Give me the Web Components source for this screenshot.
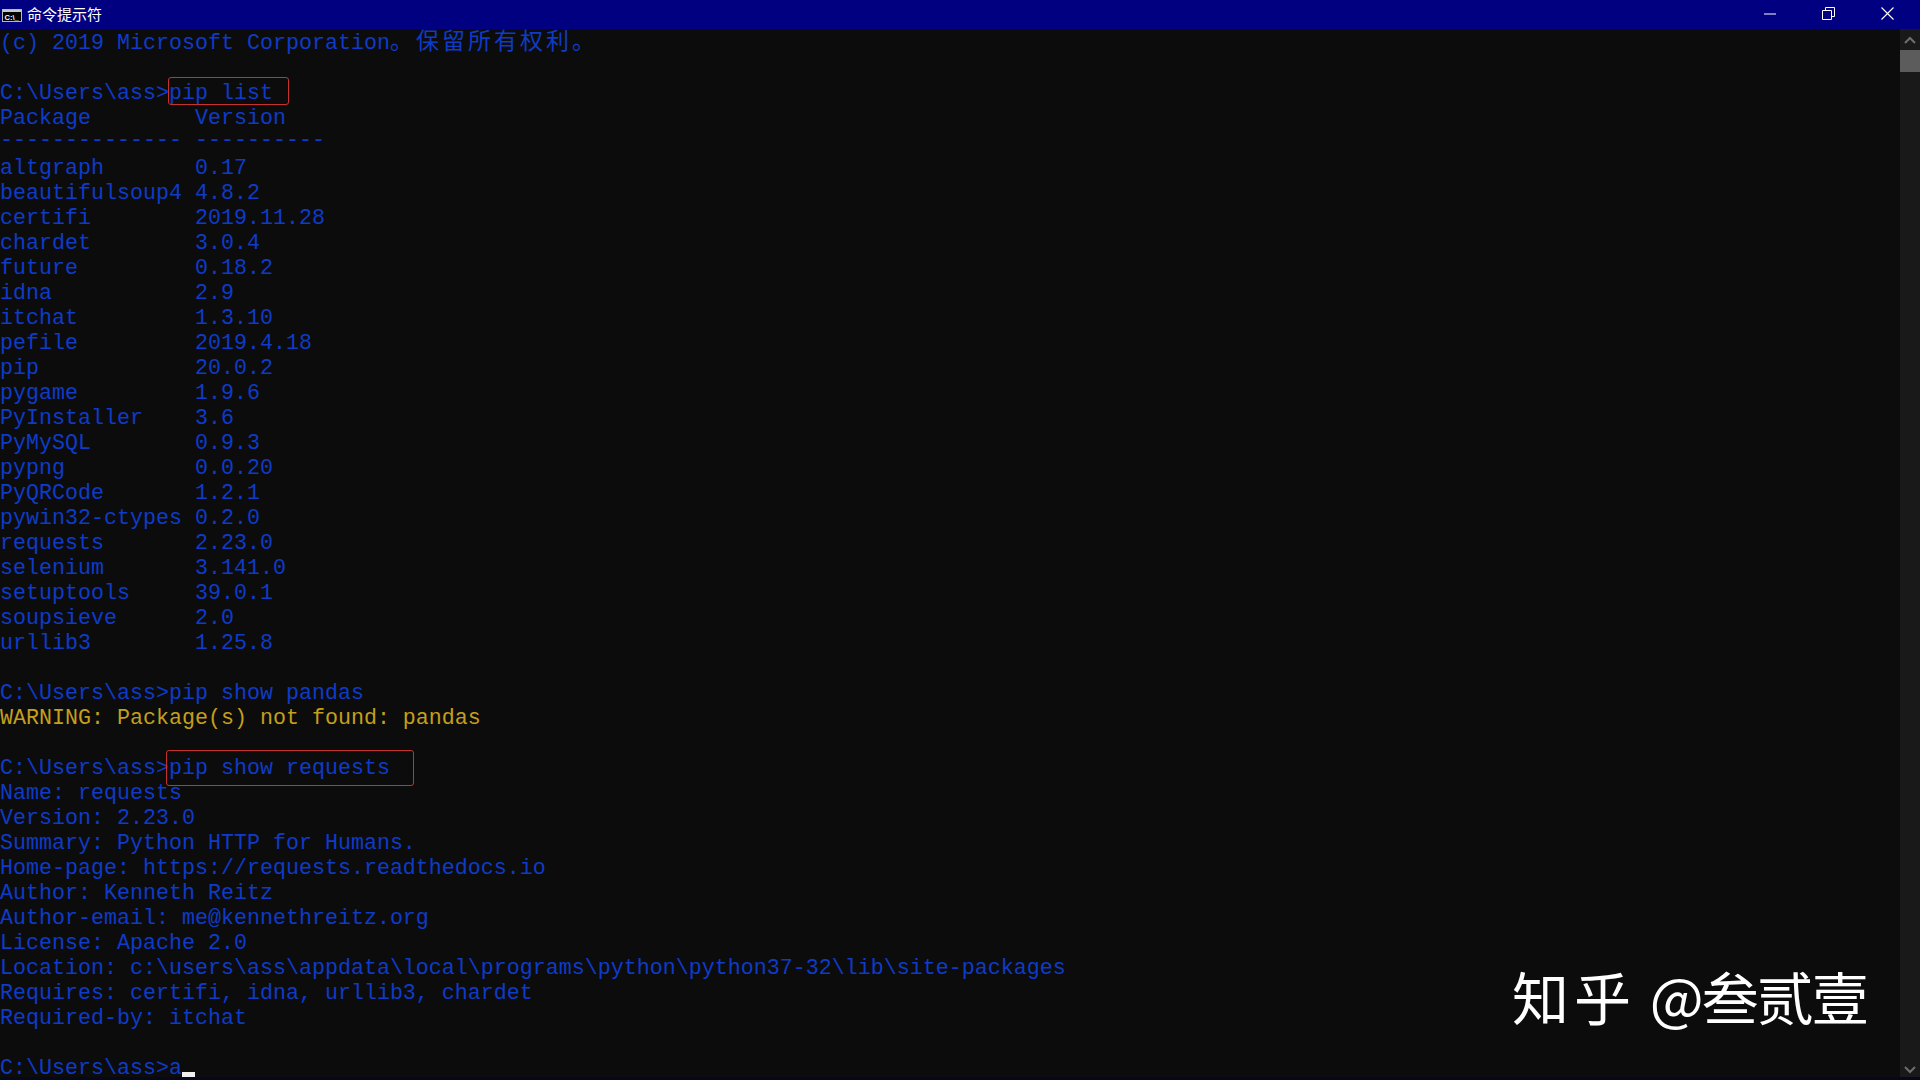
<!DOCTYPE html>
<html lang="zh"><head><meta charset="utf-8"><title>命令提示符</title>
<style>
html,body{margin:0;padding:0;height:100%;background:#0c0c0c;overflow:hidden}
</style></head>
<body>
<cmd-window>
<term-line>(c) 2019 Microsoft Corporation<c-wide>。保留所有权利。</c-wide></term-line>
<term-line></term-line>
<term-line>C:\Users\ass&gt;pip list</term-line>
<term-line>Package        Version</term-line>
<term-line><c-raise>-------------- ----------</c-raise></term-line>
<term-line>altgraph       0.17</term-line>
<term-line>beautifulsoup4 4.8.2</term-line>
<term-line>certifi        2019.11.28</term-line>
<term-line>chardet        3.0.4</term-line>
<term-line>future         0.18.2</term-line>
<term-line>idna           2.9</term-line>
<term-line>itchat         1.3.10</term-line>
<term-line>pefile         2019.4.18</term-line>
<term-line>pip            20.0.2</term-line>
<term-line>pygame         1.9.6</term-line>
<term-line>PyInstaller    3.6</term-line>
<term-line>PyMySQL        0.9.3</term-line>
<term-line>pypng          0.0.20</term-line>
<term-line>PyQRCode       1.2.1</term-line>
<term-line>pywin32-ctypes 0.2.0</term-line>
<term-line>requests       2.23.0</term-line>
<term-line>selenium       3.141.0</term-line>
<term-line>setuptools     39.0.1</term-line>
<term-line>soupsieve      2.0</term-line>
<term-line>urllib3        1.25.8</term-line>
<term-line></term-line>
<term-line>C:\Users\ass&gt;pip show pandas</term-line>
<term-line tone="warn">WARNING: Package(s) not found: pandas</term-line>
<term-line></term-line>
<term-line>C:\Users\ass&gt;pip show requests</term-line>
<term-line>Name: requests</term-line>
<term-line>Version: 2.23.0</term-line>
<term-line>Summary: Python HTTP for Humans.</term-line>
<term-line>Home-page: https://requests.readthedocs.io</term-line>
<term-line>Author: Kenneth Reitz</term-line>
<term-line>Author-email: me@kennethreitz.org</term-line>
<term-line>License: Apache 2.0</term-line>
<term-line>Location: c:\users\ass\appdata\local\programs\python\python37-32\lib\site-packages</term-line>
<term-line>Requires: certifi, idna, urllib3, chardet</term-line>
<term-line>Required-by: itchat</term-line>
<term-line></term-line>
<term-line>C:\Users\ass&gt;a<term-cursor></term-cursor></term-line>
</cmd-window>
<script>
const def=(name,css,html)=>customElements.define(name,class extends HTMLElement{
  constructor(){super();const r=this.attachShadow({mode:'open'});r.innerHTML=`<style>${css}</style>${html}`;}
});
def('c-wide',`:host{display:inline;font-family:"Noto Sans CJK SC",sans-serif;font-size:23px;line-height:0;letter-spacing:3px;font-weight:400}`,'<slot></slot>');
def('c-raise',`:host{display:inline;vertical-align:3px;line-height:0}`,'<slot></slot>');
def('term-line',`:host{display:block;height:25px;line-height:25px;white-space:pre;color:#0e3bc8}
:host([tone=warn]){color:#c49f1c}`,'<slot></slot>');
def('term-cursor',`:host{display:inline-block;width:13px;height:5px;background:#f0f0f0;vertical-align:-3px}`,'');
def('title-bar',`:host{display:flex;align-items:center;height:29px;box-sizing:border-box;padding:0 3px 2px 0;background:#000080;color:#fff;flex:none}
.ico{margin-left:2px;width:20px;height:13px;flex:none;margin-top:3px}
.t{margin-left:5px;font:15px/27px "Noto Sans CJK SC",sans-serif;flex:1}
.b{width:59px;height:27px;flex:none;display:flex;align-items:center;justify-content:center}
svg{display:block}`,
`<svg class="ico" viewBox="0 0 20 13"><rect x=".5" y=".5" width="19" height="12" fill="#000" stroke="#b9b9b9"/><rect x="1" y="1" width="18" height="2" fill="#c8c8c8"/><text x="2.5" y="10.5" font-family="Liberation Sans" font-size="7.5" font-weight="700" fill="#fff">C:\\_</text></svg>
<span class="t">命令提示符</span>
<span class="b"><svg width="12" height="2"><rect width="12" height="1" y="0.5" fill="#fff"/></svg></span>
<span class="b"><svg width="13" height="13" viewBox="0 0 13 13" fill="none" stroke="#fff"><path d="M.5 3.5h9v9h-9zM3.5 3V.5h9v9H10"/></svg></span>
<span class="b"><svg width="13" height="13" viewBox="0 0 13 13" stroke="#fff" fill="none" stroke-width="1.1"><path d="M.5.5l12 12M12.5.5l-12 12"/></svg></span>`);
def('scroll-bar',`:host{display:flex;flex-direction:column;width:20px;background:#191919;flex:none}
.a{height:21px;display:flex;align-items:center;justify-content:center;flex:none}
.th{height:22px;background:#5c5c5c;flex:none}.sp{flex:1}`,
`<div class="a"><svg width="12" height="8" viewBox="0 0 12 8" fill="none" stroke="#6e6e6e" stroke-width="2"><path d="M1 7l5-5 5 5"/></svg></div><div class="th"></div><div class="sp"></div><div class="a"><svg width="12" height="8" viewBox="0 0 12 8" fill="none" stroke="#6e6e6e" stroke-width="2"><path d="M1 1l5 5 5-5"/></svg></div>`);
def('cmd-window',`:host{display:flex;flex-direction:column;height:1080px;width:1920px;background:#0c0c0c;position:relative;overflow:hidden}
.main{flex:1;display:flex;min-height:0}
.out{flex:1;padding-top:2px;min-height:0;font:21.67px/25px "Liberation Mono",monospace;font-weight:400}
.box{position:absolute;border:1.2px solid #c8322e;border-radius:3px;box-sizing:border-box}
.wm{position:absolute;left:1512px;top:957px;color:#fff;font:400 57px/76px "Noto Sans CJK SC",sans-serif;white-space:pre;word-spacing:6px}
.edge{position:absolute;left:0;right:0;bottom:0;height:3px;background:#07071a}`,
`<title-bar></title-bar><div class="main"><div class="out"><slot></slot></div><scroll-bar></scroll-bar></div>
<div class="box" style="left:168px;top:77px;width:121px;height:28px"></div>
<div class="box" style="left:166px;top:750px;width:248px;height:36px"></div>
<div class="wm"><span style="letter-spacing:5px">知</span>乎 <span style="letter-spacing:-2px">@叁贰</span>壹</div><div class="edge"></div>`);
</script>
</body></html>
